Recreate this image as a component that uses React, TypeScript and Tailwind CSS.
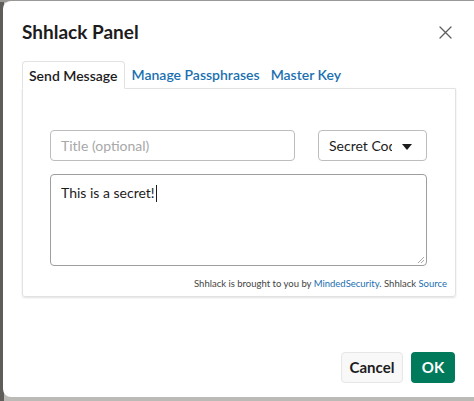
import React from "react";

function CloseIcon() {
  return (
    <svg width="13" height="13" viewBox="0 0 13 13" fill="none" stroke="#5e5e5e" strokeWidth="1.3" strokeLinecap="round">
      <path d="M1 1 L12 12 M12 1 L1 12" />
    </svg>
  );
}

function Caret() {
  return (
    <svg width="10" height="6" viewBox="0 0 10 6">
      <path d="M0 0 H10 L5 6 Z" fill="#1d1c1d" />
    </svg>
  );
}

export default function App() {
  return (
    <div
      className="relative w-[474px] h-[401px] overflow-hidden bg-[#bcbab6]"
      style={{ fontFamily: "Lato, 'Noto Sans', sans-serif" }}
    >
      <div className="absolute left-0 top-0 w-[4px] h-full bg-[#5f5d5a]" />
      <div className="absolute left-0 top-0 w-full h-[2px] bg-[#9a9896]" />
      <div className="absolute left-[3px] top-[1px] w-[480px] h-[396px] rounded-[8px] bg-white flex flex-col text-[#1d1c1d]">
        {/* header */}
        <div className="flex items-center justify-between pl-[22px] pr-[31px] pt-[15px] h-[46px]">
          <h1 className="text-[19px] font-bold leading-[28px] ml-[-3px]">Shhlack Panel</h1>
          <button className="mt-[2px]">
            <CloseIcon />
          </button>
        </div>

        {/* tabs */}
        <div className="flex items-end pl-[19px] mt-[14px] h-[27px]">
          <div className="h-[28px] px-[6px] flex items-center border border-[#e2e2e2] border-b-white rounded-t-[4px] bg-white text-[14px] font-semibold relative z-10 mb-[-1px]">
            Send Message
          </div>
          <div className="h-[27px] flex items-center text-[14px] font-semibold text-[#1a6fb0] ml-[7px]">
            Manage Passphrases
          </div>
          <div className="h-[27px] flex items-center text-[14px] font-semibold text-[#1a6fb0] ml-[11px]">
            Master Key
          </div>
        </div>

        {/* tab panel */}
        <div className="ml-[19px] w-[434px] h-[209px] border border-[#e2e2e2] rounded-b-[3px] shadow-[0_1px_2px_rgba(0,0,0,0.12)] flex flex-col">
          <div className="flex items-center pl-[27px] pr-[28px] mt-[41px] gap-[23px]">
            <div className="w-[245px] h-[31px] border border-[#bdbdbd] rounded-[4px] flex items-center pl-[10px] text-[14px] text-[#a8a8a8]">
              Title (optional)
            </div>
            <div className="w-[109px] h-[31px] border border-[#bdbdbd] rounded-[4px] flex items-center pl-[10px] pr-[14px] text-[14px] justify-between">
              <span className="whitespace-nowrap overflow-hidden w-[63px]">Secret Code</span>
              <span className="mt-[3px]">
                <Caret />
              </span>
            </div>
          </div>
          <div className="ml-[27px] mt-[13px] w-[377px] h-[92px] border border-[#9e9e9e] rounded-[4px] relative px-[10px] pt-[7px] text-[14px]">
            <span>This is a secret!</span>
            <span className="inline-block w-[1px] h-[17px] bg-[#1d1c1d] align-[-4px] ml-[1px]" />
            <svg className="absolute right-[2px] bottom-[2px]" width="7" height="7" viewBox="0 0 7 7" stroke="#aaa" strokeWidth="1">
              <path d="M1 7 L7 1 M4 7 L7 4" />
            </svg>
          </div>
          <div className="mt-[11px] pr-[8px] text-right text-[9.5px] text-[#444] whitespace-nowrap">
            Shhlack is brought to you by <span className="text-[#1a6fb0]">MindedSecurity</span>. Shhlack{" "}
            <span className="text-[#1a6fb0]">Source</span>
          </div>
        </div>

        {/* footer buttons */}
        <div className="flex justify-end gap-[8px] pr-[28px] mt-[55px]">
          <button className="h-[31px] w-[62px] rounded-[4px] border border-[#e6e6e6] bg-[#f8f8f8] text-[15px] font-bold text-[#1d1c1d]">
            Cancel
          </button>
          <button className="h-[31px] w-[44px] rounded-[4px] bg-[#007a5a] text-[15px] font-bold text-white">
            OK
          </button>
        </div>
      </div>
    </div>
  );
}
